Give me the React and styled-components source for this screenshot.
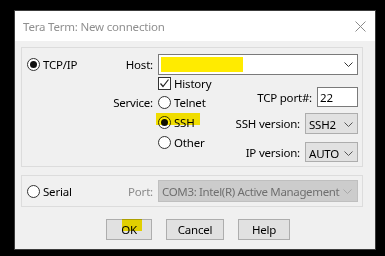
import React from "react";
import styled, { createGlobalStyle } from "styled-components";

const Global = createGlobalStyle`
  html, body { margin: 0; padding: 0; background: #000; }
  body { font-family: "Noto Sans", "Segoe UI", sans-serif; font-size: 11.5px; letter-spacing: -0.2px; color: #000; }
  * { box-sizing: border-box; }
`;

const Screen = styled.div`
  position: relative;
  width: 385px;
  height: 256px;
  background: #000;
  padding: 10px 0 0 14px;
  overflow: hidden;
`;

const Window = styled.div`
  width: 362px;
  height: 240px;
  border: 1px solid #3c3c3c;
  background: #f0f0f0;
  display: flex;
  flex-direction: column;
`;

const TitleBar = styled.div`
  height: 30px;
  background: #fff;
  display: flex;
  align-items: center;
  justify-content: space-between;
  padding: 0 9px 0 8px;
  color: #8f8f8f;
  flex: none;
`;

const TitleText = styled.span`
  font-size: 11.5px;
`;

const Body = styled.div`
  flex: 1;
  padding: 6px 0 0 6px;
  display: flex;
  flex-direction: column;
`;

const Group = styled.div`
  width: 342px;
  height: ${(p) => p.$h}px;
  margin-top: ${(p) => p.$mt || 0}px;
  border: 1px solid #dcdcdc;
  padding: ${(p) => p.$pad};
  display: flex;
  flex-direction: ${(p) => p.$dir || "column"};
  align-items: ${(p) => p.$align || "stretch"};
`;

const TopRow = styled.div`
  display: flex;
  align-items: center;
  height: 21px;
  gap: 5px;
`;

const LeftCell = styled.div`
  width: 131px;
  flex: none;
  display: flex;
  align-items: center;
  justify-content: space-between;
  padding-left: 5px;
`;

const Option = styled.label`
  display: flex;
  align-items: center;
  gap: 3px;
  white-space: nowrap;
  grid-column: ${(p) => p.$col || "auto"};
  grid-row: ${(p) => p.$row || "auto"};
`;

const Radio = styled.span`
  width: 13px;
  height: 13px;
  border-radius: 50%;
  border: 1px solid #333;
  background: #fff;
  display: flex;
  align-items: center;
  justify-content: center;
  flex: none;
  &::after {
    content: "";
    width: 7px;
    height: 7px;
    border-radius: 50%;
    background: ${(p) => (p.$on ? "#111" : "transparent")};
  }
`;

const Check = styled.span`
  width: 13px;
  height: 13px;
  border: 1px solid #333;
  background: #fff;
  display: flex;
  align-items: center;
  justify-content: center;
  flex: none;
`;

const Label = styled.span`
  color: ${(p) => (p.$muted ? "#8a8a8a" : "#000")};
  white-space: nowrap;
  grid-column: ${(p) => p.$col || "auto"};
  grid-row: ${(p) => p.$row || "auto"};
  justify-self: ${(p) => p.$justify || "auto"};
`;

const Combo = styled.div`
  flex: 1;
  min-width: 0;
  height: ${(p) => p.$h || 21}px;
  margin-left: ${(p) => p.$ml || 0}px;
  background: ${(p) => p.$bg};
  border: 1px solid ${(p) => p.$border};
  color: ${(p) => p.$color || "#000"};
  display: flex;
  align-items: center;
  gap: 3px;
  padding: ${(p) => p.$pad || "0 4px 0 3px"};
  overflow: hidden;
  white-space: nowrap;
`;

const ComboText = styled.span`
  overflow: hidden;
  white-space: nowrap;
  flex: 1;
  min-width: 0;
  letter-spacing: ${(p) => p.$ls || "-0.2px"};
`;

const Lower = styled.div`
  display: flex;
`;

const LeftGrid = styled.div`
  display: grid;
  grid-template-columns: 131px 82px;
  grid-template-rows: 17px 21px 19px 20px;
  column-gap: 5px;
  align-items: center;
  flex: none;
`;

const RightCol = styled.div`
  flex: 1;
  min-width: 0;
  display: flex;
  flex-direction: column;
  align-items: flex-end;
  padding-top: 12px;
`;

const FieldRow = styled.div`
  display: flex;
  align-items: center;
  gap: 5px;
  margin-top: ${(p) => p.$mt || 0}px;
`;

const Input = styled.div`
  width: 41px;
  height: 20px;
  background: #fff;
  border: 1px solid #7a7a7a;
  padding-left: 2px;
  display: flex;
  align-items: center;
`;

const Select = styled.div`
  width: 53px;
  height: ${(p) => p.$h || 20}px;
  background: #e1e1e1;
  border: 1px solid #adadad;
  display: flex;
  align-items: center;
  justify-content: space-between;
  padding: 2px 4px 0 3px;
`;

const ButtonRow = styled.div`
  display: flex;
  gap: 14px;
  margin-top: 12px;
  padding-left: 85px;
`;

const Button = styled.div`
  width: ${(p) => p.$w}px;
  height: 21px;
  background: #e1e1e1;
  border: 1px solid #adadad;
  display: flex;
  align-items: center;
  justify-content: center;
`;

const Highlight = styled.div`
  position: absolute;
  left: ${(p) => p.$x}px;
  top: ${(p) => p.$y}px;
  width: ${(p) => p.$w}px;
  height: ${(p) => p.$h}px;
  background: #ffeb00;
  mix-blend-mode: multiply;
  pointer-events: none;
`;

const Chevron = ({ color = "#333" }) => (
  <svg width="9" height="5" viewBox="0 0 9 5" style={{ flex: "none" }}>
    <polyline points="0.5,0.5 4.5,4.5 8.5,0.5" fill="none" stroke={color} strokeWidth="1" />
  </svg>
);

const CloseIcon = () => (
  <svg width="11" height="11" viewBox="0 0 11 11">
    <path d="M0.5 0.5 L10.5 10.5 M10.5 0.5 L0.5 10.5" stroke="#8a8a8a" strokeWidth="1" fill="none" />
  </svg>
);

const CheckMark = () => (
  <svg width="11" height="11" viewBox="0 0 11 11">
    <polyline points="1.5,5.5 4,8.5 9.5,1.5" fill="none" stroke="#222" strokeWidth="1.2" />
  </svg>
);

export default function App() {
  return (
    <>
      <Global />
      <Screen>
        <Window>
          <TitleBar>
            <TitleText>Tera Term: New connection</TitleText>
            <CloseIcon />
          </TitleBar>
          <Body>
            <Group $h={120} $pad="6px 4px 0 0">
              <TopRow>
                <LeftCell>
                  <Option>
                    <Radio $on />
                    <Label>TCP/IP</Label>
                  </Option>
                  <Label>Host:</Label>
                </LeftCell>
                <Combo $bg="#fff" $border="#7a7a7a">
                  <ComboText />
                  <Chevron />
                </Combo>
              </TopRow>
              <Lower>
                <LeftGrid>
                  <Option $col="2" $row="1">
                    <Check>
                      <CheckMark />
                    </Check>
                    <Label>History</Label>
                  </Option>
                  <Label $col="1" $row="2" $justify="end">Service:</Label>
                  <Option $col="2" $row="2">
                    <Radio />
                    <Label>Telnet</Label>
                  </Option>
                  <Option $col="2" $row="3">
                    <Radio $on />
                    <Label>SSH</Label>
                  </Option>
                  <Option $col="2" $row="4">
                    <Radio />
                    <Label>Other</Label>
                  </Option>
                </LeftGrid>
                <RightCol>
                  <FieldRow>
                    <Label>TCP port#:</Label>
                    <Input>22</Input>
                  </FieldRow>
                  <FieldRow $mt={6}>
                    <Label>SSH version:</Label>
                    <Select $h={21}>
                      <span>SSH2</span>
                      <Chevron color="#555" />
                    </Select>
                  </FieldRow>
                  <FieldRow $mt={8}>
                    <Label>IP version:</Label>
                    <Select>
                      <span>AUTO</span>
                      <Chevron color="#555" />
                    </Select>
                  </FieldRow>
                </RightCol>
              </Lower>
            </Group>
            <Group $h={32} $mt={8} $pad="0 4px 0 0" $dir="row" $align="center">
              <TopRow>
                <LeftCell>
                  <Option>
                    <Radio />
                    <Label>Serial</Label>
                  </Option>
                  <Label $muted>Port:</Label>
                </LeftCell>
              </TopRow>
              <Combo $bg="#cccccc" $border="#bfbfbf" $color="#6f6f6f" $h={22} $ml={5} $pad="0 5px 0 3px">
                <ComboText $ls="-0.35px">COM3: Intel(R) Active Management T</ComboText>
                <Chevron color="#a8a8a8" />
              </Combo>
            </Group>
            <ButtonRow>
              <Button $w={46}>OK</Button>
              <Button $w={58}>Cancel</Button>
              <Button $w={52}>Help</Button>
            </ButtonRow>
          </Body>
        </Window>
        <Highlight $x={161} $y={57} $w={82} $h={15} />
        <Highlight $x={156} $y={113} $w={44} $h={12} />
        <Highlight $x={122} $y={219} $w={20} $h={12} />
      </Screen>
    </>
  );
}
